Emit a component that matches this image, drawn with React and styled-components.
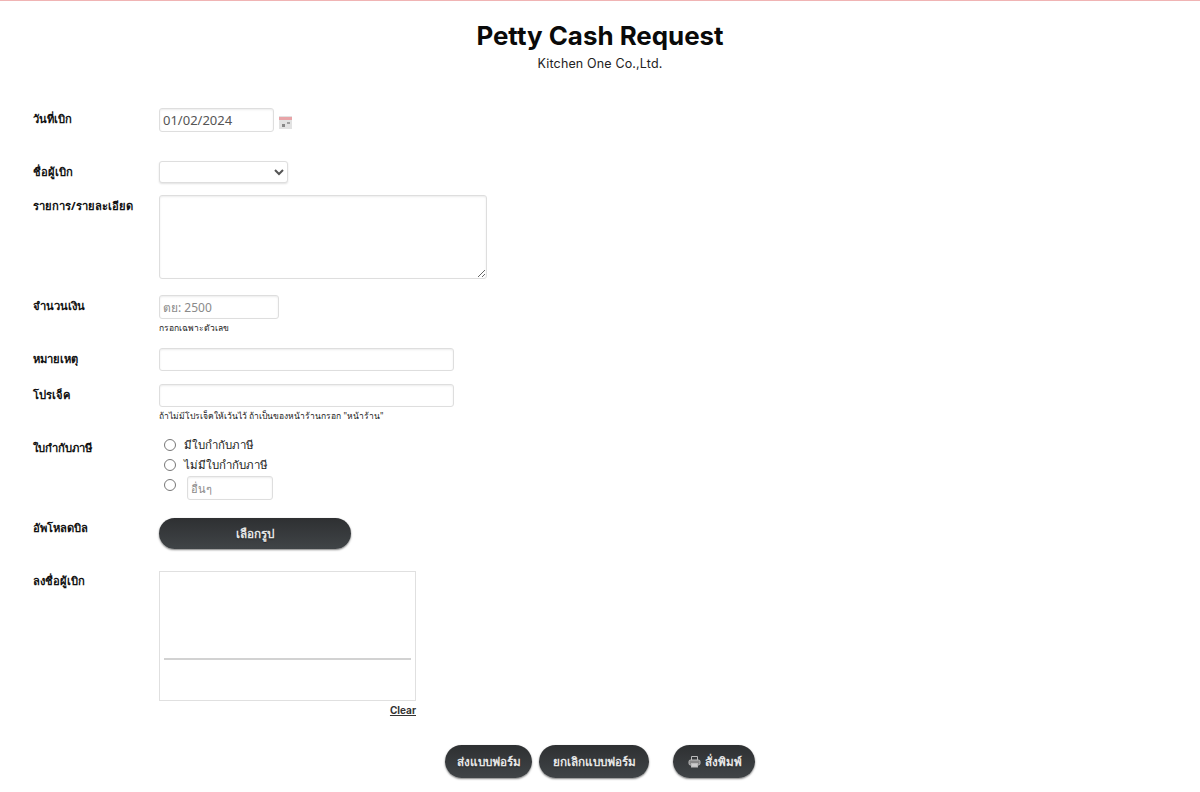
import React from "react";
import styled, { createGlobalStyle } from "styled-components";

const Global = createGlobalStyle`
  html, body { margin: 0; padding: 0; background: #fff; }
  body { font-family: Inter, "Noto Sans", "Noto Sans CJK SC", sans-serif; color: #111; }
`;
const Page = styled.div`
  height: 792px; box-sizing: border-box; overflow: hidden;
  border-top: 1px solid #f0b4b4;
`;
const Header = styled.header`
  text-align: center; padding-top: 19px; height: 88px; box-sizing: border-box;
`;
const Title = styled.h1`
  margin: 0; font: 700 25.9px/32px Inter, sans-serif; color: #0a0a0a;
`;
const Subtitle = styled.div`
  font: 400 12.5px/14px Inter, sans-serif; color: #222; margin-top: 5px; letter-spacing: .15px;
`;
const Form = styled.form`
  padding: 19px 0 0 33px; display: flex; flex-direction: column;
`;
const Row = styled.div`
  display: grid; grid-template-columns: 126px 1fr; align-items: start;
  margin-top: ${p => p.$top || 0}px;
`;
const Label = styled.label`
  font: 700 11.2px/16px "Noto Sans", sans-serif; color: #111; padding-top: ${p => p.$pad ?? 3}px;
`;
const inputBase = `
  box-sizing: border-box; display: block; background: #fff; border: 1px solid #dedede;
  border-radius: 3px; box-shadow: inset 0 1px 2px rgba(0,0,0,.08);
  font: 400 13px "Noto Sans", sans-serif; color: #555; padding: 0 3px; outline: none;
  &::placeholder { color: #8a8a8a; opacity: 1; font-size: 12px; }
`;
const Input = styled.input`
  ${inputBase}
  width: ${p => p.$w}px; height: ${p => p.$h}px;
`;
const DateWrap = styled.div` display: flex; align-items: center; gap: 5px; `;
const Select = styled.select`
  ${inputBase}
  width: 129px; height: 22px; box-shadow: 0 1px 2px rgba(0,0,0,.12);
`;
const TextArea = styled.textarea`
  ${inputBase}
  width: 328px; height: 84px;
`;
const Hint = styled.div`
  font: 400 8.5px/11px "Noto Sans", sans-serif; color: #222; margin-top: ${p => p.$top}px;
`;
const Radios = styled.div` display: flex; flex-direction: column; padding-left: 5px; `;
const RadioRow = styled.label`
  display: flex; align-items: ${p => p.$other ? "flex-start" : "center"}; gap: 8px;
  font: 400 11.4px/20px "Noto Sans", sans-serif; color: #222; height: ${p => p.$other ? 25 : 20}px;
`;
const Radio = styled.span`
  box-sizing: border-box; width: 12px; height: 12px; border: 1px solid #777; border-radius: 50%; flex: none;
  margin-top: ${p => p.$mt || 0}px; background: #fff;
`;
const OtherInput = styled(Input)`
  margin: 1px 0 0 3px; font-size: 11px;
  &::placeholder { font-size: 11px; }
`;
const DarkButton = styled.button`
  box-sizing: border-box; border: 0; border-radius: 17px; color: #e6e6e6;
  background: linear-gradient(#2e3032, #404447);
  box-shadow: 0 1px 2px rgba(0,0,0,.5);
  font: 600 11.7px "Noto Sans", sans-serif; text-shadow: 0 1px 1px rgba(0,0,0,.4);
  height: ${p => p.$h}px; width: ${p => p.$w}px; padding: 0;
  display: inline-flex; align-items: center; justify-content: center; gap: 4px;
`;
const Signature = styled.div`
  box-sizing: border-box; width: 257px; height: 130px; border: 1px solid #e0e0e0;
  display: flex; padding: 86px 4px 0;
`;
const SignLine = styled.div` height: 2px; width: 100%; background: #d2d2d2; `;
const Clear = styled.a`
  display: block; width: 257px; text-align: right; margin-top: 3px;
  font: 700 10px/13px Inter, sans-serif; color: #333; text-decoration: underline;
`;
const Footer = styled.div`
  display: flex; justify-content: center; margin-top: 28px; padding-left: 0;
`;
const FooterGap = styled.span` width: ${p => p.$w}px; `;
const CalendarSvg = styled.svg` margin-top: 4px; flex: none; `;
const PrinterSvg = styled.svg` margin-left: 1px; flex: none; `;

const CalendarIcon = () => (
  <CalendarSvg width="13" height="13" viewBox="0 0 13 13">
    <rect width="13" height="13" fill="#e2e2e2" />
    <rect width="13" height="3" y="1" fill="#e8a4a8" />
    <rect x="3" y="8" width="3" height="3" fill="#888" />
    <rect x="8" y="6" width="3" height="2" fill="#a0a0a0" />
  </CalendarSvg>
);
const PrinterIcon = () => (
  <PrinterSvg width="13" height="13" viewBox="0 0 13 13" fill="none" stroke="#bbb" strokeWidth="1">
    <path d="M3.5 5V1.5h6V5" />
    <rect x="1" y="5" width="11" height="5" rx="1.5" fill="#888" />
    <rect x="3.5" y="8.5" width="6" height="3.5" fill="#ccc" />
  </PrinterSvg>
);

export default function App() {
  return (
    <Page>
      <Global />
      <Header>
        <Title>Petty Cash Request</Title>
        <Subtitle>Kitchen One Co.,Ltd.</Subtitle>
      </Header>
      <Form>
        <Row>
          <Label $pad={3}>วันที่เบิก</Label>
          <DateWrap>
            <Input $w={115} $h={24} defaultValue="01/02/2024" />
            <CalendarIcon />
          </DateWrap>
        </Row>
        <Row $top={29}>
          <Label>ชื่อผู้เบิก</Label>
          <Select />
        </Row>
        <Row $top={12}>
          <Label $pad={3}>รายการ/รายละเอียด</Label>
          <TextArea />
        </Row>
        <Row $top={16}>
          <Label $pad={3}>จำนวนเงิน</Label>
          <div>
            <Input $w={120} $h={24} placeholder="ตย: 2500" />
            <Hint $top={3}>กรอกเฉพาะตัวเลข</Hint>
          </div>
        </Row>
        <Row $top={15}>
          <Label $pad={3}>หมายเหตุ</Label>
          <Input $w={295} $h={23} />
        </Row>
        <Row $top={13}>
          <Label $pad={3}>โปรเจ็ค</Label>
          <div>
            <Input $w={295} $h={23} />
            <Hint $top={3}>ถ้าไม่มีโปรเจ็คให้เว้นไว้ ถ้าเป็นของหน้าร้านกรอก "หน้าร้าน"</Hint>
          </div>
        </Row>
        <Row $top={14}>
          <Label $pad={5}>ใบกำกับภาษี</Label>
          <Radios>
            <RadioRow><Radio />มีใบกำกับภาษี</RadioRow>
            <RadioRow><Radio />ไม่มีใบกำกับภาษี</RadioRow>
            <RadioRow $other>
              <Radio $mt={4} />
              <OtherInput $w={86} $h={24} placeholder="อื่นๆ" />
            </RadioRow>
          </Radios>
        </Row>
        <Row $top={18}>
          <Label $pad={2}>อัพโหลดบิล</Label>
          <DarkButton type="button" $w={192} $h={31}>เลือกรูป</DarkButton>
        </Row>
        <Row $top={22}>
          <Label $pad={2}>ลงชื่อผู้เบิก</Label>
          <div>
            <Signature><SignLine /></Signature>
            <Clear>Clear</Clear>
          </div>
        </Row>
      </Form>
      <Footer>
        <DarkButton type="button" $w={87} $h={33}>ส่งแบบฟอร์ม</DarkButton>
        <FooterGap $w={7} />
        <DarkButton type="button" $w={110} $h={33}>ยกเลิกแบบฟอร์ม</DarkButton>
        <FooterGap $w={24} />
        <DarkButton type="button" $w={82} $h={33}><PrinterIcon />สั่งพิมพ์</DarkButton>
      </Footer>
    </Page>
  );
}
